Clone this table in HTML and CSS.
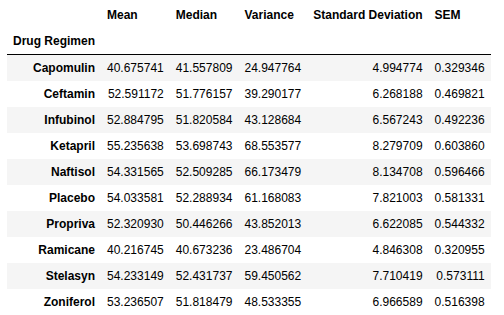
FILE: index.html
```html
<!DOCTYPE html>
<html>
<head>
<meta charset="utf-8">
<link rel="stylesheet" href="styles.css">
</head>
<body>
<div class="output">
<table class="dataframe">
  <thead>
    <tr>
      <th></th>
      <th>Mean</th>
      <th>Median</th>
      <th>Variance</th>
      <th>Standard Deviation</th>
      <th>SEM</th>
    </tr>
    <tr>
      <th>Drug Regimen</th>
      <th></th>
      <th></th>
      <th></th>
      <th></th>
      <th></th>
    </tr>
  </thead>
  <tbody>
    <tr><th>Capomulin</th><td>40.675741</td><td>41.557809</td><td>24.947764</td><td>4.994774</td><td>0.329346</td></tr>
    <tr><th>Ceftamin</th><td>52.591172</td><td>51.776157</td><td>39.290177</td><td>6.268188</td><td>0.469821</td></tr>
    <tr><th>Infubinol</th><td>52.884795</td><td>51.820584</td><td>43.128684</td><td>6.567243</td><td>0.492236</td></tr>
    <tr><th>Ketapril</th><td>55.235638</td><td>53.698743</td><td>68.553577</td><td>8.279709</td><td>0.603860</td></tr>
    <tr><th>Naftisol</th><td>54.331565</td><td>52.509285</td><td>66.173479</td><td>8.134708</td><td>0.596466</td></tr>
    <tr><th>Placebo</th><td>54.033581</td><td>52.288934</td><td>61.168083</td><td>7.821003</td><td>0.581331</td></tr>
    <tr><th>Propriva</th><td>52.320930</td><td>50.446266</td><td>43.852013</td><td>6.622085</td><td>0.544332</td></tr>
    <tr><th>Ramicane</th><td>40.216745</td><td>40.673236</td><td>23.486704</td><td>4.846308</td><td>0.320955</td></tr>
    <tr><th>Stelasyn</th><td>54.233149</td><td>52.431737</td><td>59.450562</td><td>7.710419</td><td>0.573111</td></tr>
    <tr><th>Zoniferol</th><td>53.236507</td><td>51.818479</td><td>48.533355</td><td>6.966589</td><td>0.516398</td></tr>
  </tbody>
</table>
</div>
</body>
</html>
```
FILE: styles.css
```css
html, body {
  margin: 0;
  padding: 0;
  background: #ffffff;
}

.output {
  padding: 2px 7px;
  font-family: "Liberation Sans", Arial, Helvetica, sans-serif;
  font-size: 12px;
  color: #000000;
}

.dataframe {
  border-collapse: collapse;
  border-spacing: 0;
  border: none;
  font-size: 12px;
  table-layout: auto;
}

.dataframe thead {
  border-bottom: 1px solid #000000;
}

.dataframe th,
.dataframe td {
  padding: 6px 6px;
  line-height: normal;
  vertical-align: middle;
  text-align: right;
  white-space: nowrap;
}

.dataframe th {
  font-weight: bold;
}

.dataframe thead th {
  text-align: left;
}

.dataframe tbody tr:nth-child(odd) {
  background: #f5f5f5;
}
```
